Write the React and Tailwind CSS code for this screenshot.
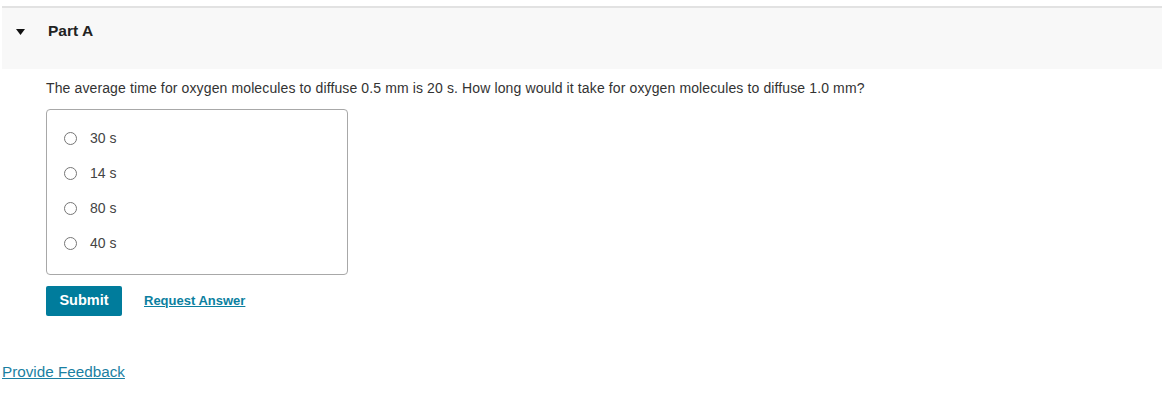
const choices = ["30 s", "14 s", "80 s", "40 s"];

const App = () => {
  return (
    <div className="w-[1164px] h-[414px] bg-white pt-[6px] px-[2px] font-['Liberation_Sans',Arial,sans-serif] text-[#333]">
      {/* Part header */}
      <div className="h-[63px] border-t-2 border-[#e2e2e2] bg-[#f8f8f8] flex items-start pt-[14px] pl-[14px]">
        <svg width="9" height="6" viewBox="0 0 9 6" className="mt-[7px]">
          <path d="M0 0 H9 L4.5 6 Z" fill="#111" />
        </svg>
        <span className="ml-[23px] text-[15.5px] leading-[18px] font-bold text-[#222]">Part A</span>
      </div>

      {/* Question */}
      <div className="pl-[44px]">
        <p className="mt-[11px] text-[14px] tracking-[0.12px] leading-[16px] text-[#333]">
          The average time for oxygen molecules to diffuse 0.5 mm is 20 s. How long would it take for oxygen molecules to diffuse 1.0 mm?
        </p>

        <div className="mt-[13px] w-[302px] h-[166px] border border-[#a8a8a8] rounded-[4px] pt-[11px] pl-[17px]">
          {choices.map((c) => (
            <label key={c} className="flex items-center h-[35px]">
              <span className="w-[13px] h-[13px] rounded-full border border-[#767676] bg-white" />
              <span className="ml-[13px] text-[14px] text-[#444]">{c}</span>
            </label>
          ))}
        </div>

        <div className="mt-[11px] flex items-center">
          <button className="w-[76px] h-[30px] rounded-[2px] bg-[#007c9c] text-white text-[14.5px] font-bold">
            Submit
          </button>
          <a href="#" className="ml-[22px] text-[13px] font-bold text-[#0b7fa0] underline">
            Request Answer
          </a>
        </div>
      </div>

      {/* Feedback */}
      <div className="mt-[44px]">
        <a href="#" className="text-[15.25px] text-[#1a7fa2] underline">
          Provide Feedback
        </a>
      </div>
    </div>
  );
};

export default App;
